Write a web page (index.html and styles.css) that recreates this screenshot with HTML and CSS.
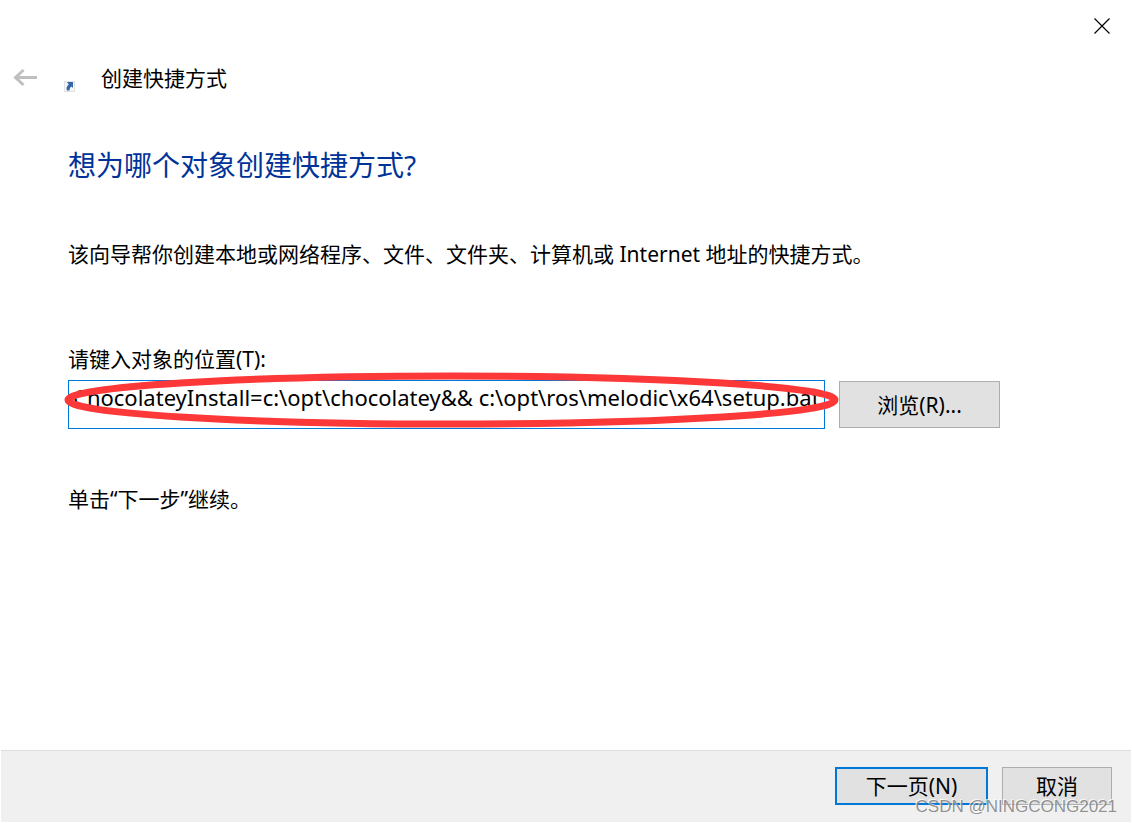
FILE: index.html
```html
<!DOCTYPE html>
<html lang="zh-CN">
<head>
<meta charset="UTF-8">
<meta name="viewport" content="width=device-width, initial-scale=1.0">
<title>创建快捷方式</title>
<link rel="stylesheet" href="styles.css">
</head>
<body>
<form class="wizard">
    <div class="titlebar">
        <button type="button" class="close" aria-label="关闭">
            <svg width="16" height="16" viewBox="0 0 16 16"><path d="M0.5 0.5L15.5 15.5M15.5 0.5L0.5 15.5" stroke="#000" stroke-width="1.2" fill="none"/></svg>
        </button>
    </div>

    <header class="header">
        <button type="button" class="back" aria-label="返回">
            <svg width="24" height="20" viewBox="0 0 24 20"><path d="M10.500 2L2.500 9.500L10.500 17M2.500 9.500H24" stroke="#bfbfbf" stroke-width="3" fill="none"/></svg>
        </button>
        <svg class="shortcut" width="11" height="11" viewBox="0 0 11 11">
            <rect x="0.5" y="0.5" width="10" height="10" fill="#f5f5f5" stroke="#e2e2e2"/>
            <path d="M3 1H9V7L7.500 5.500C6 6.500 5.500 7.500 5.500 9.500H3C2 7.500 2.500 5.500 4.700 3.500Z" fill="#3766a8"/>
        </svg>
        <span class="title">创建快捷方式</span>
    </header>

    <main class="content">
        <h1>想为哪个对象创建快捷方式?</h1>
        <p class="intro">该向导帮你创建本地或网络程序、文件、文件夹、计算机或 Internet 地址的快捷方式。</p>
        <label for="location">请键入对象的位置(T):</label>
        <div class="row">
            <div class="field">
                <input type="text" id="location" name="location" value="ChocolateyInstall=c:\opt\chocolatey&amp;&amp; c:\opt\ros\melodic\x64\setup.bat">
                <svg class="mark" viewBox="0 0 774 56" preserveAspectRatio="none"><ellipse cx="387" cy="28" rx="383" ry="24" fill="none" stroke="#fc3838" stroke-width="7"/></svg>
            </div>
            <button type="button" class="browse">浏览(R)...</button>
        </div>
        <p class="hint">单击“下一步”继续。</p>
    </main>

    <footer class="footer">
        <button type="submit" class="next">下一页(N)</button>
        <button type="button" class="cancel">取消</button>
        <span class="watermark">CSDN @NINGCONG2021</span>
    </footer>
</form>
</body>
</html>
```
FILE: styles.css
```css
* {
    box-sizing: border-box;
}

body {
    margin: 0;
    background-color: white;
    color: black;
    font-family: "Noto Sans", "Noto Sans CJK SC", sans-serif;
    font-size: 21px;
    line-height: 28px;
}

button, input {
    font: inherit;
    color: inherit;
}

h1, p {
    margin: 0;
}

.wizard {
    display: flex;
    flex-direction: column;
    min-height: 100vh;
    padding: 0 1px 1px;
}

.titlebar {
    display: flex;
    justify-content: flex-end;
    padding: 18px 21px 0 0;
}

.close, .back {
    display: flex;
    padding: 0;
    border: none;
    background: none;
}

.header {
    display: flex;
    align-items: center;
    padding: 30px 12px 0;
}

.shortcut {
    margin: 16px 26px 0 27px;
}

.content {
    flex: 1;
    display: flex;
    flex-direction: column;
    padding: 52px 131px 52px 67px;
}

h1 {
    color: #003399;
    font-size: 28px;
    font-weight: normal;
    line-height: 42px;
}

.intro {
    margin: 54px 0 77px;
}

.row {
    display: flex;
    align-items: center;
    gap: 14px;
    margin-top: 7px;
}

.field {
    position: relative;
    flex: 1;
}

.field input {
    display: block;
    width: 100%;
    height: 49px;
    padding: 0 4px 15px;
    border: 1px solid #0078d7;
    border-radius: 0;
    outline: none;
    background-color: white;
    font-size: 22px;
}

/* hand-drawn ring around the typed path */
.mark {
    position: absolute;
    left: -4px;
    top: -8px;
    width: calc(100% + 18px);
    height: 56px;
    z-index: 1;
    pointer-events: none;
}

.browse, .next, .cancel {
    padding: 0;
    border: 1px solid #adadad;
    background-color: #e1e1e1;
}

.browse {
    width: 161px;
    height: 47px;
}

.hint {
    margin-top: 56px;
}

.footer {
    position: relative;
    display: flex;
    justify-content: flex-end;
    gap: 14px;
    padding: 16px 19px 17px;
    border-top: 1px solid #dfdfdf;
    background-color: #f0f0f0;
}

.next, .cancel {
    height: 38px;
}

.next {
    width: 153px;
    border: 2px solid #0078d7;
}

.cancel {
    width: 110px;
}

.watermark {
    position: absolute;
    right: 14px;
    bottom: 4px;
    color: rgba(120, 120, 120, 0.8);
    font-family: "Liberation Sans", sans-serif;
    font-size: 17px;
    line-height: 22px;
    text-shadow: -1px -1px 0 rgba(255, 255, 255, 0.8);
}
```
